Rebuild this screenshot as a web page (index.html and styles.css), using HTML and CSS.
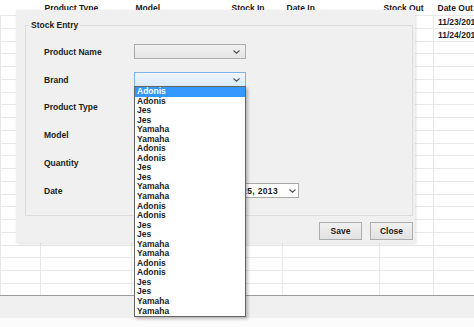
FILE: index.html
```html
<!DOCTYPE html>
<html lang="en">

<head>
    <meta charset="UTF-8">
    <meta name="viewport" content="width=device-width, initial-scale=1.0">
    <title>Stock</title>
    <link rel="stylesheet" href="styles.css">
</head>

<body>
    <div class="window">
        <div class="grid">
            <table>
                <colgroup>
                    <col style="width: 40px">
                    <col style="width: 91px">
                    <col style="width: 96px">
                    <col style="width: 55px">
                    <col style="width: 97px">
                    <col style="width: 54px">
                    <col style="width: 87px">
                </colgroup>
                <tr>
                    <th></th>
                    <th>Product Type</th>
                    <th>Model</th>
                    <th>Stock In</th>
                    <th>Date In</th>
                    <th>Stock Out</th>
                    <th>Date Out</th>
                </tr>
                <tr><td></td><td></td><td></td><td></td><td></td><td></td><td>11/23/2013</td></tr>
                <tr><td></td><td></td><td></td><td></td><td></td><td></td><td>11/24/2013</td></tr>
                <tr><td></td><td></td><td></td><td></td><td></td><td></td><td></td></tr>
                <tr><td></td><td></td><td></td><td></td><td></td><td></td><td></td></tr>
                <tr><td></td><td></td><td></td><td></td><td></td><td></td><td></td></tr>
                <tr><td></td><td></td><td></td><td></td><td></td><td></td><td></td></tr>
                <tr><td></td><td></td><td></td><td></td><td></td><td></td><td></td></tr>
                <tr><td></td><td></td><td></td><td></td><td></td><td></td><td></td></tr>
                <tr><td></td><td></td><td></td><td></td><td></td><td></td><td></td></tr>
                <tr><td></td><td></td><td></td><td></td><td></td><td></td><td></td></tr>
                <tr><td></td><td></td><td></td><td></td><td></td><td></td><td></td></tr>
                <tr><td></td><td></td><td></td><td></td><td></td><td></td><td></td></tr>
                <tr><td></td><td></td><td></td><td></td><td></td><td></td><td></td></tr>
                <tr><td></td><td></td><td></td><td></td><td></td><td></td><td></td></tr>
                <tr><td></td><td></td><td></td><td></td><td></td><td></td><td></td></tr>
                <tr><td></td><td></td><td></td><td></td><td></td><td></td><td></td></tr>
                <tr><td></td><td></td><td></td><td></td><td></td><td></td><td></td></tr>
                <tr><td></td><td></td><td></td><td></td><td></td><td></td><td></td></tr>
                <tr><td></td><td></td><td></td><td></td><td></td><td></td><td></td></tr>
                <tr><td></td><td></td><td></td><td></td><td></td><td></td><td></td></tr>
                <tr><td></td><td></td><td></td><td></td><td></td><td></td><td></td></tr>
                <tr><td></td><td></td><td></td><td></td><td></td><td></td><td></td></tr>
            </table>
        </div>
        <div class="statusbar"></div>

        <div class="dialog">
            <fieldset class="group">
                <legend>Stock Entry</legend>
                <div class="form">
                    <label>Product Name</label>
                    <div class="combo">
                        <svg class="chev" width="7" height="4" viewBox="0 0 7 4"><path d="M0.5 0.5 L3.5 3.2 L6.5 0.5" /></svg>
                    </div>

                    <label>Brand</label>
                    <div class="combo hot">
                        <svg class="chev" width="7" height="4" viewBox="0 0 7 4"><path d="M0.5 0.5 L3.5 3.2 L6.5 0.5" /></svg>
                    </div>

                    <label>Product Type</label>
                    <div class="combo">
                        <svg class="chev" width="7" height="4" viewBox="0 0 7 4"><path d="M0.5 0.5 L3.5 3.2 L6.5 0.5" /></svg>
                    </div>

                    <label>Model</label>
                    <div class="combo">
                        <svg class="chev" width="7" height="4" viewBox="0 0 7 4"><path d="M0.5 0.5 L3.5 3.2 L6.5 0.5" /></svg>
                    </div>

                    <label>Quantity</label>
                    <div class="textbox"></div>

                    <label>Date</label>
                    <div class="combo date">
                        <span>Monday, November 25, 2013</span>
                        <svg class="chev" width="7" height="4" viewBox="0 0 7 4"><path d="M0.5 0.5 L3.5 3.2 L6.5 0.5" /></svg>
                    </div>
                </div>
            </fieldset>
            <div class="actions">
                <button class="btn">Save</button>
                <button class="btn">Close</button>
            </div>
        </div>

        <ul class="droplist">
            <li class="selected">Adonis</li>
            <li>Adonis</li>
            <li>Jes</li>
            <li>Jes</li>
            <li>Yamaha</li>
            <li>Yamaha</li>
            <li>Adonis</li>
            <li>Adonis</li>
            <li>Jes</li>
            <li>Jes</li>
            <li>Yamaha</li>
            <li>Yamaha</li>
            <li>Adonis</li>
            <li>Adonis</li>
            <li>Jes</li>
            <li>Jes</li>
            <li>Yamaha</li>
            <li>Yamaha</li>
            <li>Adonis</li>
            <li>Adonis</li>
            <li>Jes</li>
            <li>Jes</li>
            <li>Yamaha</li>
            <li>Yamaha</li>
        </ul>
    </div>
</body>

</html>
```

FILE: styles.css
```css
body {
    margin: 0;
    font-family: "Liberation Sans", Arial, sans-serif;
    font-size: 8.5px;
    font-weight: bold;
    color: #1c1c1c;
}

.window {
    position: relative;
    width: 474px;
    height: 327px;
    overflow: hidden;
    background: #fbfbfb;
}

.grid {
    height: 295px;
    background: #fff;
    border-bottom: 1px solid #9c9c9c;
    overflow: hidden;
}

.grid table {
    border-collapse: collapse;
    table-layout: fixed;
    width: 520px;
}

.grid th {
    height: 14px;
    padding: 1px 0 0 4px;
    text-align: left;
    font-weight: bold;
    white-space: nowrap;
    overflow: hidden;
}

.grid td {
    height: 11.75px;
    padding: 0 0 0 4px;
    border: 1px solid #e8e8e8;
    white-space: nowrap;
    overflow: hidden;
}

.statusbar {
    height: 22px;
    background: #f0f0f0;
}

.dialog {
    position: absolute;
    left: 16px;
    top: 10px;
    width: 399px;
    height: 233px;
    box-sizing: border-box;
    padding: 10px 2px 3px 9px;
    background: #f0f0f0;
    box-shadow: 1px 1px 3px rgba(0, 0, 0, 0.12);
    display: flex;
    flex-direction: column;
}

.group {
    margin: 0;
    height: 196px;
    box-sizing: border-box;
    border: 1px solid #dcdcdc;
    padding: 8px 0 0 18px;
}

.group legend {
    margin-left: -15px;
    padding: 0 2px;
    line-height: 10px;
}

.form {
    display: grid;
    grid-template-columns: 90px auto;
    grid-auto-rows: 27.8px;
    align-items: center;
    justify-items: start;
}

.combo,
.textbox {
    width: 112px;
    height: 15px;
    box-sizing: border-box;
    border: 1px solid #adadad;
    background: linear-gradient(#f2f2f2, #e4e4e4);
    display: flex;
    align-items: center;
    justify-content: flex-end;
    padding-right: 5px;
}

.combo.hot {
    background: linear-gradient(#eef5fd, #dcebfb);
    border-color: #7eb4ea;
}

.textbox {
    background: #fff;
}

.combo.date {
    width: 165px;
    background: #fff;
    border-color: #a9a9a9;
    padding-right: 2px;
    gap: 11px;
    overflow: hidden;
    white-space: nowrap;
}

.combo.date span {
    letter-spacing: 0.35px;
}

.chev {
    flex: none;
    fill: none;
    stroke: #505050;
    stroke-width: 1.1;
}

.actions {
    display: flex;
    justify-content: flex-end;
    gap: 8px;
    margin-top: 6px;
}

.btn {
    width: 43px;
    height: 18px;
    padding: 0;
    font: inherit;
    color: inherit;
    border: 1px solid #adadad;
    background: linear-gradient(#f1f1f1, #e2e2e2);
}

.droplist {
    position: absolute;
    left: 134px;
    top: 86px;
    width: 112px;
    box-sizing: border-box;
    margin: 0;
    padding: 0;
    list-style: none;
    background: #fff;
    border: 1px solid #646464;
    box-shadow: 2px 2px 3px rgba(0, 0, 0, 0.25);
}

.droplist li {
    height: 9.55px;
    line-height: 9.55px;
    padding-left: 2px;
}

.droplist li.selected {
    background: #3399ff;
    color: #fff;
}
```
